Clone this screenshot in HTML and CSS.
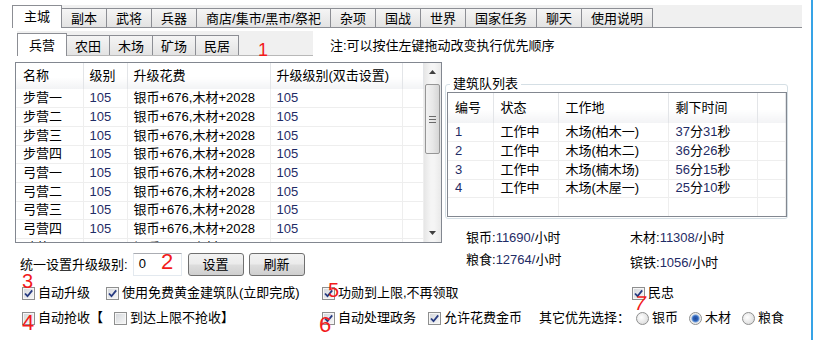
FILE: index.html
```html
<!DOCTYPE html>
<html lang="zh-CN">
  <head>
    <meta charset="utf-8">
    <link rel="stylesheet" href="styles.css">
  </head>
  <body>
    <div class="window">
      <div class="tabbar">
        <div class="tab active">主城</div>
        <div class="tab">副本</div>
        <div class="tab">武将</div>
        <div class="tab">兵器</div>
        <div class="tab">商店/集市/黑市/祭祀</div>
        <div class="tab">杂项</div>
        <div class="tab">国战</div>
        <div class="tab">世界</div>
        <div class="tab">国家任务</div>
        <div class="tab">聊天</div>
        <div class="tab">使用说明</div>
      </div>

      <div class="subhead">
        <div class="tabbar subtabs">
          <div class="tab active">兵营</div>
          <div class="tab">农田</div>
          <div class="tab">木场</div>
          <div class="tab">矿场</div>
          <div class="tab">民居</div>
        </div>
        <div class="note">注:可以按住左键拖动改变执行优先顺序</div>
      </div>

      <div class="main">
        <div class="left">
          <div class="listbox">
            <table class="grid buildings">
              <colgroup>
                <col class="c-name"><col class="c-lv"><col class="c-cost"><col class="c-target"><col>
              </colgroup>
              <tr><th>名称</th><th>级别</th><th>升级花费</th><th>升级级别(双击设置)</th><th></th></tr>
              <tr><td>步营一</td><td class="n">105</td><td>银币+676,木材+2028</td><td class="n">105</td><td></td></tr>
              <tr><td>步营二</td><td class="n">105</td><td>银币+676,木材+2028</td><td class="n">105</td><td></td></tr>
              <tr><td>步营三</td><td class="n">105</td><td>银币+676,木材+2028</td><td class="n">105</td><td></td></tr>
              <tr><td>步营四</td><td class="n">105</td><td>银币+676,木材+2028</td><td class="n">105</td><td></td></tr>
              <tr><td>弓营一</td><td class="n">105</td><td>银币+676,木材+2028</td><td class="n">105</td><td></td></tr>
              <tr><td>弓营二</td><td class="n">105</td><td>银币+676,木材+2028</td><td class="n">105</td><td></td></tr>
              <tr><td>弓营三</td><td class="n">105</td><td>银币+676,木材+2028</td><td class="n">105</td><td></td></tr>
              <tr><td>弓营四</td><td class="n">105</td><td>银币+676,木材+2028</td><td class="n">105</td><td></td></tr>
              <tr><td>骑营一</td><td class="n">105</td><td>银币+676,木材+2028</td><td class="n">105</td><td></td></tr>
            </table>
            <div class="scroll">
              <div class="arrow">
                <svg width="7" height="4" viewBox="0 0 7 4"><path d="M0 4 L3.5 0 L7 4 Z" fill="#404040"/></svg>
              </div>
              <div class="thumb">
                <span class="grip"></span><span class="grip"></span><span class="grip"></span>
              </div>
              <div class="arrow bottom">
                <svg width="7" height="4" viewBox="0 0 7 4"><path d="M0 0 L3.5 4 L7 0 Z" fill="#404040"/></svg>
              </div>
            </div>
          </div>

          <div class="setrow">
            <span>统一设置升级级别:</span>
            <div class="input">0</div>
            <button class="btn">设置</button>
            <button class="btn">刷新</button>
          </div>
        </div>

        <div class="right">
          <fieldset class="group">
            <legend>建筑队列表</legend>
            <div class="listbox queue">
              <table class="grid">
                <colgroup>
                  <col class="c-id"><col class="c-state"><col class="c-place"><col class="c-time"><col>
                </colgroup>
                <tr><th>编号</th><th>状态</th><th>工作地</th><th>剩下时间</th><th></th></tr>
                <tr><td class="n">1</td><td>工作中</td><td>木场(柏木一)</td><td><span class="n">37</span>分<span class="n">31</span>秒</td><td></td></tr>
                <tr><td class="n">2</td><td>工作中</td><td>木场(柏木二)</td><td><span class="n">36</span>分<span class="n">26</span>秒</td><td></td></tr>
                <tr><td class="n">3</td><td>工作中</td><td>木场(楠木场)</td><td><span class="n">56</span>分<span class="n">15</span>秒</td><td></td></tr>
                <tr><td class="n">4</td><td>工作中</td><td>木场(木屋一)</td><td><span class="n">25</span>分<span class="n">10</span>秒</td><td></td></tr>
                <tr class="filler"><td></td><td></td><td></td><td></td><td></td></tr>
              </table>
            </div>
          </fieldset>

          <div class="rates">
            <div>银币:<span class="n">11690/</span>小时</div>
            <div>木材:<span class="n">11308/</span>小时</div>
            <div>粮食:<span class="n">12764/</span>小时</div>
            <div class="low">镔铁:<span class="n">1056/</span>小时</div>
          </div>
        </div>
      </div>

      <div class="options">
        <div class="opt">
          <label class="check"><span class="box"><svg viewBox="0 0 11 11"><path d="M2 5.5 L4.5 8.2 L9.2 2.4"/></svg></span>自动升级</label>
          <label class="check"><span class="box"><svg viewBox="0 0 11 11"><path d="M2 5.5 L4.5 8.2 L9.2 2.4"/></svg></span>使用免费黄金建筑队(立即完成)</label>
        </div>
        <div class="opt">
          <label class="check"><span class="box"><svg viewBox="0 0 11 11"><path d="M2 5.5 L4.5 8.2 L9.2 2.4"/></svg></span>功勋到上限,不再领取</label>
        </div>
        <div class="opt">
          <label class="check"><span class="box"><svg viewBox="0 0 11 11"><path d="M2 5.5 L4.5 8.2 L9.2 2.4"/></svg></span>民忠</label>
        </div>

        <div class="opt">
          <label class="check tight"><span class="box"></span>自动抢收【</label>
          <label class="check"><span class="box"></span>到达上限不抢收】</label>
        </div>
        <div class="opt wide">
          <label class="check"><span class="box"><svg viewBox="0 0 11 11"><path d="M2 5.5 L4.5 8.2 L9.2 2.4"/></svg></span>自动处理政务</label>
          <label class="check"><span class="box"><svg viewBox="0 0 11 11"><path d="M2 5.5 L4.5 8.2 L9.2 2.4"/></svg></span>允许花费金币</label>
          <span class="prefer">其它优先选择：</span>
          <label class="check radio-item"><span class="radio"></span>银币</label>
          <label class="check radio-item"><span class="radio on"></span>木材</label>
          <label class="check radio-item"><span class="radio"></span>粮食</label>
        </div>
      </div>

      <span class="mark m1">1</span>
      <span class="mark m2">2</span>
      <span class="mark m3">3</span>
      <span class="mark m4">4</span>
      <span class="mark m5">5</span>
      <span class="mark m6">6</span>
      <span class="mark m7">7</span>
    </div>
  </body>
</html>
```

FILE: styles.css
```css
* {
  margin: 0;
  box-sizing: border-box;
}
body {
  font-family: "Liberation Sans", "Noto Sans CJK SC", sans-serif;
  font-size: 13px;
  line-height: 16px;
  color: #000;
  background: #fff;
}
.window {
  position: relative;
  width: 813px;
  height: 340px;
  border-right: 2px solid #36a3e6;
  overflow: hidden;
}

/* tab strips */
.tabbar {
  display: flex;
  align-items: flex-end;
  width: 790px;
  height: 23px;
  margin: 5px 0 0 12px;
  background: #f0f0f0;
  border-bottom: 1px solid #8c8e94;
}
.tab {
  height: 19px;
  padding: 1px 9px 0;
  line-height: 17px;
  white-space: nowrap;
  border: 1px solid #8c8e94;
  border-bottom: none;
  margin-right: -1px;
  background: linear-gradient(#f5f5f5, #e3e3e3);
}
.tab.active {
  position: relative;
  z-index: 1;
  height: 23px;
  margin-bottom: -1px;
  padding: 2px 11px 0;
  background: #fff;
}
.subhead {
  display: flex;
  align-items: flex-end;
  margin-top: 3px;
}
.subtabs {
  width: 296px;
  height: 25px;
  margin: 0 0 0 17px;
  border-bottom-color: #b8b8b8;
}
.subtabs .tab {
  height: 20px;
  padding: 2px 8px 0;
}
.subtabs .tab.active {
  height: 23px;
  padding: 3px 11px 0;
}
.note {
  margin: 0 0 2px 17px;
}

/* main area */
.main {
  display: flex;
  margin-top: 6px;
  padding-left: 15px;
}
.left {
  width: 427px;
}
.right {
  width: 343px;
  margin-left: 3px;
}
.listbox {
  display: flex;
  height: 181px;
  border: 1px solid #828790;
  background: #fff;
  overflow: hidden;
}
.grid {
  table-layout: fixed;
  border-collapse: collapse;
  width: 408px;
  flex: none;
}
.grid th {
  height: 26px;
  padding: 0 0 1px 6px;
  font-weight: normal;
  text-align: left;
  white-space: nowrap;
  border-right: 1px solid #e3e5e8;
  background: linear-gradient(#fff 55%, #f2f3f5);
}
.grid td {
  height: 18.7px;
  padding: 0 0 0 6px;
  white-space: nowrap;
  border-right: 1px solid #eeeeee;
  border-bottom: 1px solid #eeeeee;
}
.buildings th:first-child,
.buildings td:first-child {
  padding-left: 7px;
}
.c-name { width: 67px; }
.c-lv { width: 44px; }
.c-cost { width: 143px; }
.c-target { width: 132px; }
.n {
  color: #1f2c66;
}

/* scrollbar */
.scroll {
  display: flex;
  flex-direction: column;
  align-items: center;
  width: 17px;
  flex: none;
  margin-left: auto;
  background: linear-gradient(90deg, #e6e6e6, #f5f5f5 40%, #f5f5f5 60%, #e9e9e9);
}
.arrow {
  display: flex;
  align-items: center;
  justify-content: center;
  width: 17px;
  height: 18px;
}
.arrow.bottom {
  margin-top: auto;
}
.thumb {
  display: flex;
  flex-direction: column;
  justify-content: center;
  align-items: center;
  gap: 2px;
  width: 15px;
  height: 70px;
  margin-top: 3px;
  border: 1px solid #969696;
  border-radius: 2px;
  background: linear-gradient(90deg, #f2f2f2, #e8e8e8 50%, #d6d6d6);
}
.grip {
  width: 7px;
  height: 1px;
  background: #6a6a6a;
}

/* building queue */
.group {
  min-width: 0;
  margin-top: 14px;
  padding: 0 0 1px 1px;
  border: 1px solid #d5dfe5;
  border-radius: 3px;
}
.group legend {
  margin-left: 3px;
  padding: 0 3px;
  line-height: 16px;
}
.queue {
  height: 125px;
}
.queue .grid {
  width: 338px;
}
.queue th {
  height: 30px;
}
.queue th,
.queue td {
  padding-left: 7px;
}
.c-id { width: 45px; }
.c-state { width: 65px; }
.c-place { width: 110px; }
.c-time { width: 89px; }
.queue .filler td {
  height: 20px;
  border-bottom: none;
}
.rates {
  display: grid;
  grid-template-columns: 164px 1fr;
  row-gap: 6px;
  margin-top: 11px;
  padding-left: 21px;
}
.rates .low {
  margin-top: 3px;
}

/* level row */
.setrow {
  display: flex;
  align-items: center;
  margin-top: 10px;
  padding-left: 5px;
}
.input {
  width: 49px;
  height: 23px;
  margin-left: 5px;
  padding: 2px 0 0 5px;
  border: 1px solid #e3e9ef;
  border-top-color: #abadb3;
  background: #fff;
}
.btn {
  width: 56px;
  height: 23px;
  margin-left: 6px;
  border: 1px solid #707070;
  border-radius: 3px;
  font: inherit;
  color: #000;
  background: linear-gradient(#f2f2f2 0%, #ebebeb 48%, #dddddd 52%, #cfcfcf 100%);
}
.btn + .btn {
  margin-left: 5px;
}

/* option rows */
.options {
  display: grid;
  grid-template-columns: 300px 310px 1fr;
  row-gap: 7px;
  margin-top: 8px;
  padding-left: 22px;
}
.opt {
  display: flex;
  align-items: center;
  height: 18px;
  white-space: nowrap;
}
.opt.wide {
  grid-column: span 2;
}
.check {
  display: inline-flex;
  align-items: center;
  margin-right: 16px;
}
.check.tight {
  margin-right: 11px;
}
.opt.wide .check {
  margin-right: 12px;
}
.box {
  display: inline-flex;
  align-items: center;
  justify-content: center;
  width: 13px;
  height: 13px;
  margin-right: 3px;
  border: 1px solid #8e8f8f;
  background: linear-gradient(135deg, #d3d6da, #f8f8f8);
  box-shadow: inset 0 0 0 1px #f6f6f6;
}
.box svg {
  width: 11px;
  height: 11px;
  fill: none;
  stroke: #263a80;
  stroke-width: 1.8;
}
.prefer {
  margin: 0 6px 0 5px;
}
.opt.wide .radio-item {
  margin-right: 11px;
}
.radio {
  width: 13px;
  height: 13px;
  margin-right: 3px;
  border: 1px solid #8e8f8f;
  border-radius: 50%;
  background: radial-gradient(circle at 40% 40%, #ffffff, #d4d4d4);
}
.radio.on {
  background: radial-gradient(circle, #1f4a9a 0, #2f62b8 2.5px, #79a6e0 3.6px, #e4e4e4 4.4px, #fafafa 6px);
}

/* red annotation numbers */
.mark {
  position: absolute;
  font-family: "Liberation Sans", sans-serif;
  font-size: 20px;
  line-height: 20px;
  color: #f21b1b;
}
.m1 { left: 258px; top: 40px; font-size: 18px; }
.m2 { left: 161px; top: 252px; font-size: 22px; }
.m3 { left: 22px; top: 271px; }
.m4 { left: 22px; top: 313px; font-size: 22px; }
.m5 { left: 328px; top: 280px; }
.m6 { left: 319px; top: 315px; font-size: 22px; }
.m7 { left: 635px; top: 293px; transform: skewX(-12deg); }
```
